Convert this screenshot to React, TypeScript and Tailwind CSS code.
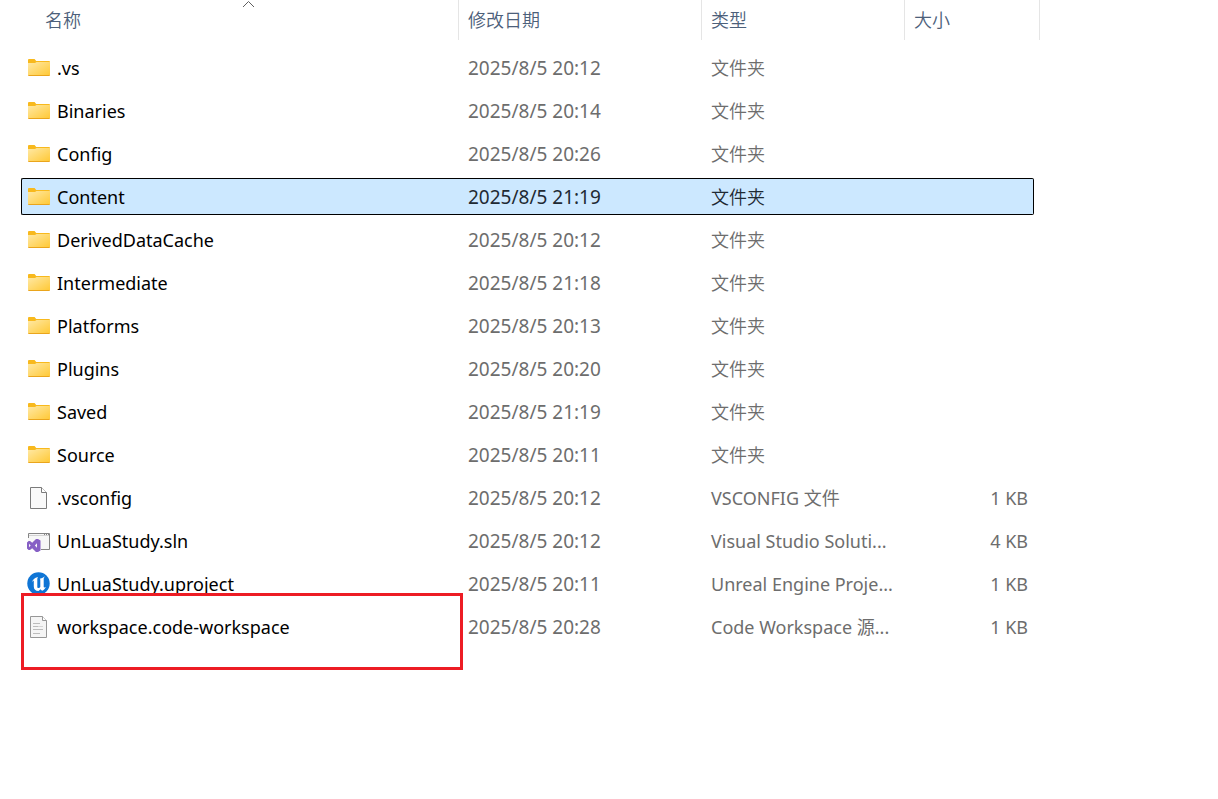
import React from 'react'

type IconKind = 'folder' | 'file' | 'solution' | 'unreal' | 'text'

interface Entry {
    name: string
    date: string
    type: string
    size?: string
    icon: IconKind
    selected?: boolean
    marked?: boolean
}

const entries: Entry[] = [
    { name: '.vs', date: '2025/8/5 20:12', type: '文件夹', icon: 'folder' },
    { name: 'Binaries', date: '2025/8/5 20:14', type: '文件夹', icon: 'folder' },
    { name: 'Config', date: '2025/8/5 20:26', type: '文件夹', icon: 'folder' },
    { name: 'Content', date: '2025/8/5 21:19', type: '文件夹', icon: 'folder', selected: true },
    { name: 'DerivedDataCache', date: '2025/8/5 20:12', type: '文件夹', icon: 'folder' },
    { name: 'Intermediate', date: '2025/8/5 21:18', type: '文件夹', icon: 'folder' },
    { name: 'Platforms', date: '2025/8/5 20:13', type: '文件夹', icon: 'folder' },
    { name: 'Plugins', date: '2025/8/5 20:20', type: '文件夹', icon: 'folder' },
    { name: 'Saved', date: '2025/8/5 21:19', type: '文件夹', icon: 'folder' },
    { name: 'Source', date: '2025/8/5 20:11', type: '文件夹', icon: 'folder' },
    { name: '.vsconfig', date: '2025/8/5 20:12', type: 'VSCONFIG 文件', size: '1 KB', icon: 'file' },
    { name: 'UnLuaStudy.sln', date: '2025/8/5 20:12', type: 'Visual Studio Soluti...', size: '4 KB', icon: 'solution' },
    { name: 'UnLuaStudy.uproject', date: '2025/8/5 20:11', type: 'Unreal Engine Proje...', size: '1 KB', icon: 'unreal' },
    { name: 'workspace.code-workspace', date: '2025/8/5 20:28', type: 'Code Workspace 源...', size: '1 KB', icon: 'text', marked: true },
]

const EntryIcon: React.FC<{ kind: IconKind }> = ({ kind }) => (
    <svg viewBox="0 0 23 23" className="w-[23px] h-[23px] shrink-0" aria-hidden="true">
        {kind === 'folder' && (
            <>
                <defs>
                    <linearGradient id="folderFront" x1="0" y1="0" x2="1" y2="1">
                        <stop offset="0" stopColor="#ffe9a6" />
                        <stop offset="1" stopColor="#ffc937" />
                    </linearGradient>
                </defs>
                <path d="M1 4a1 1 0 0 1 1-1h5.6l1.6 2H22a1 1 0 0 1 1 1v3H1z" fill="#f8b91d" />
                <path d="M1 7h7l1.5-1H23v13H1z" fill="url(#folderFront)" />
                <path d="M1 19h22a1 1 0 0 1-1 1H2a1 1 0 0 1-1-1z" fill="#eaa51c" />
            </>
        )}
        {kind === 'file' && (
            <>
                <path d="M3.5 1.5h11l5 5v16h-16z" fill="#f9f9f9" stroke="#7b7b7b" />
                <path d="M14.5 1.5v5h5" fill="#fff" stroke="#7b7b7b" />
            </>
        )}
        {kind === 'text' && (
            <>
                <path d="M3.5 1.5h12l4 4v17h-16z" fill="#f5f5f5" stroke="#979797" />
                <path d="M15.5 1.5v4h4" fill="#fff" stroke="#979797" />
                <path d="M6 8.5h7M6 11.5h5M6 14.5h10M6 18.5h7" stroke="#bcbcbc" />
                <path d="M11 11.5h5" stroke="#d5d5d5" />
            </>
        )}
        {kind === 'solution' && (
            <>
                <path d="M1.5 4.5h21v16h-21z" fill="#f7f7f7" stroke="#858585" />
                <path d="M2 6.5h20" stroke="#d2d2d2" />
                <path d="M17 5.5h1M19 5.5h1M21 5.5h1" stroke="#858585" />
                <path d="M0 9h14v14H0z" fill="#f7f7f7" />
                <path d="M0 21h14v2H0zM0 9h1v14H0z" fill="#fff" />
                <path d="M9 10h2l2.5 1.6v9.8L11 23H9l-3.8-3.8L3 21H1.6L0 19.6v-6.2L1.6 12H3l2.2 1.8zM2 14.8v3.4l1.7-1.7zM10 14.2l-2.2 2.3 2.2 2.3z" fill="#865fc5" fillRule="evenodd" />
            </>
        )}
        {kind === 'unreal' && (
            <>
                <circle cx="11.5" cy="11.5" r="11.2" fill="#0f75d5" />
                <path d="M4.6 10.6c1-2.8 3-4.8 6.4-5.6-.6.8-.7 1.5-.7 2.3v7.4c0 1 .5 1.4 1.2 1.4.8 0 1.3-.4 1.8-1V8c0-.8-.3-1.1-1-1.2 1.9-.3 3.8-1.1 5.7-2.6-.9 1.1-1.3 2-1.3 3.1v7.2c0 .7.4 1 .9 1 .5 0 1-.3 1.4-.8-.8 2-2.2 3.3-4 4.1l-1.5-1.5-2 1.7c-3 0-4.7-1.4-4.7-4.4V9.2c0-.8-.9-.6-2.2 1.4z" fill="#fff" />
            </>
        )}
    </svg>
)

const EntryRow: React.FC<{ entry: Entry }> = ({ entry }) => {
    const box = entry.selected ? 'bg-[#cce8ff] border-black text-[#1f2a33]' : 'border-transparent text-[#6d6d6d]'
    const typeWeight = entry.icon === 'folder' ? 'font-[350]' : 'font-normal'

    return (
        <tr>
            <td className="relative p-0 pb-[6px]">
                <div className={`flex items-center gap-[7px] h-[37px] pl-[5px] border-y border-l rounded-l-xs ${box}`}>
                    <EntryIcon kind={entry.icon} />
                    <span className="text-black">{entry.name}</span>
                </div>
                {entry.marked && (
                    <div className="absolute -top-[15px] left-0 -right-1 h-[77px] border-3 border-[#ed1c24] pointer-events-none"></div>
                )}
            </td>
            <td className="p-0 pb-[6px]">
                <div className={`flex items-center h-[37px] pl-[9px] text-[19px] border-y ${box}`}>{entry.date}</div>
            </td>
            <td className="p-0 pb-[6px]">
                <div className={`flex items-center h-[37px] pl-[9px] border-y ${typeWeight} ${box}`}>{entry.type}</div>
            </td>
            <td className="p-0 pb-[6px] pr-[6px]">
                <div className={`flex items-center justify-end h-[37px] pr-[5px] border-y border-r rounded-r-xs ${box}`}>{entry.size}</div>
            </td>
        </tr>
    )
}

const HeaderCell: React.FC<{ label: string }> = ({ label }) => (
    <th className="p-0 font-[350]">
        <button type="button" className="flex items-center w-full h-10 pl-[9px] border-r border-[#e5e5e5]">{label}</button>
    </th>
)

const App: React.FC = () => {
    return (
        <main className="min-h-screen bg-white pl-[21px] pr-[178px] text-[18px] leading-6 font-['Noto_Sans','Noto_Sans_CJK_SC',sans-serif]">
            <table className="w-full table-fixed border-separate border-spacing-0">
                <colgroup>
                    <col />
                    <col className="w-[243px]" />
                    <col className="w-[203px]" />
                    <col className="w-[135px]" />
                </colgroup>
                <thead className="text-[#4c607a]">
                    <tr>
                        <th className="relative p-0 font-[350]" aria-sort="ascending">
                            <button type="button" className="flex items-center w-full h-10 pl-6 border-r border-[#e5e5e5]">名称</button>
                            <div className="absolute top-0 left-4 right-0 flex justify-center pointer-events-none">
                                <svg viewBox="0 0 13 9" className="w-[13px] h-[9px]" aria-hidden="true">
                                    <path d="M1 7 6.5 1.5 12 7" fill="none" stroke="#5f5f5f" />
                                </svg>
                            </div>
                        </th>
                        <HeaderCell label="修改日期" />
                        <HeaderCell label="类型" />
                        <HeaderCell label="大小" />
                    </tr>
                    <tr>
                        <td colSpan={4} className="h-[9px] p-0"></td>
                    </tr>
                </thead>
                <tbody>
                    {entries.map((entry) => (
                        <EntryRow key={entry.name} entry={entry} />
                    ))}
                </tbody>
            </table>
        </main>
    )
}

export default App
